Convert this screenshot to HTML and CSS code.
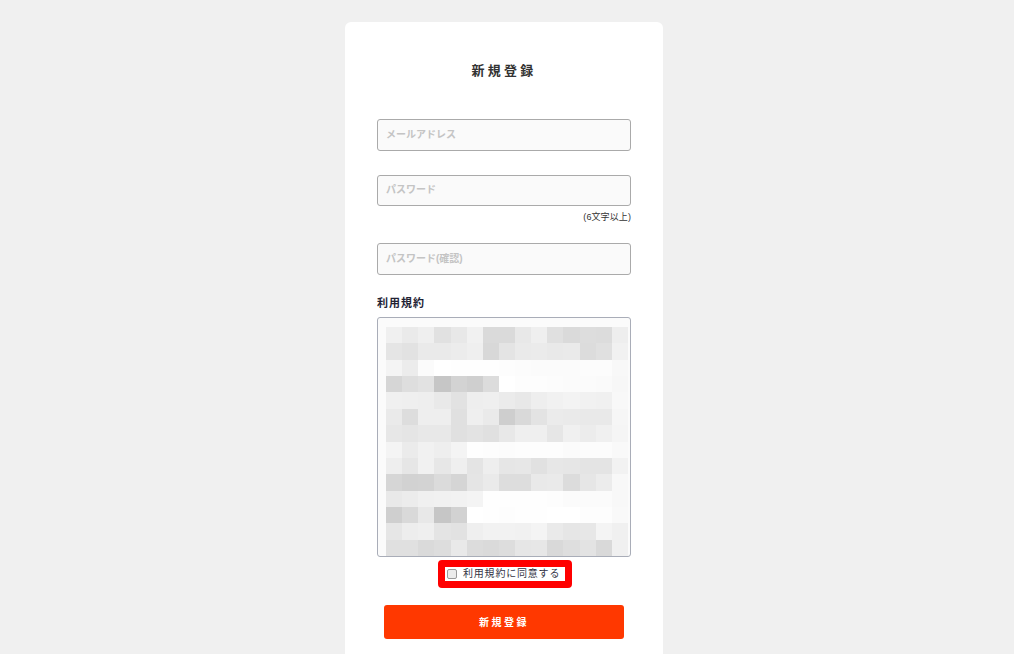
FILE: index.html
```html
<!DOCTYPE html>
<html lang="ja">
<head>
<meta charset="UTF-8">
<title>新規登録</title>
<link rel="stylesheet" href="styles.css">
</head>
<body>
<div class="card">
  <h1 class="title">新規登録</h1>
  <form class="form">
    <div class="field">
      <input class="text-input" type="text" placeholder="メールアドレス">
    </div>
    <div class="field field-password">
      <input class="text-input text-input-short" type="password" placeholder="パスワード">
      <p class="note">(6文字以上)</p>
    </div>
    <div class="field field-confirm">
      <input class="text-input" type="password" placeholder="パスワード(確認)">
    </div>
    <p class="terms-label">利用規約</p>
    <div class="terms-box">
      <div class="mosaic" id="mosaic"></div>
    </div>
    <div class="agree-row">
      <label class="agree">
        <input class="agree-check" type="checkbox">
        <span class="agree-text">利用規約に同意する</span>
      </label>
    </div>
    <button class="submit" type="button">新規登録</button>
  </form>
</div>
<script src="script.js"></script>
</body>
</html>
```

FILE: styles.css
```css
html, body {
  margin: 0;
  height: 654px;
  overflow: hidden;
}
body {
  box-sizing: border-box;
  padding-right: 6px;
  background-color: #f0f0f0;
  font-family: "Liberation Sans", "Noto Sans CJK JP", sans-serif;
  color: #333;
}
.card {
  box-sizing: border-box;
  width: 318px;
  height: 700px;
  margin: 22px auto 0;
  padding: 0 32px;
  background-color: #fff;
  border-radius: 6px;
}
.title {
  margin: 0;
  padding-top: 39px;
  height: 58px;
  line-height: 20px;
  font-size: 13px;
  font-weight: bold;
  letter-spacing: 3.2px;
  text-align: center;
}
.field {
  margin-bottom: 24px;
}
.field-password {
  margin-bottom: 20px;
}
.field-confirm {
  margin-bottom: 19px;
}
.text-input {
  display: block;
  box-sizing: border-box;
  width: 254px;
  height: 32px;
  padding: 0 0 2px 8px;
  background-color: #fafafa;
  border: 1px solid #aaa;
  border-radius: 3px;
  font-family: inherit;
  font-size: 10px;
  font-weight: bold;
  outline: none;
}
.text-input-short {
  height: 31px;
}
.text-input::placeholder {
  color: #c4c4c4;
}
.note {
  margin: 5px 0 0;
  line-height: 12px;
  font-size: 9px;
  letter-spacing: 0.1px;
  text-align: right;
}
.terms-label {
  margin: 0 0 5px;
  line-height: 18px;
  font-size: 11px;
  font-weight: bold;
  letter-spacing: 1px;
  color: #223;
}
.terms-box {
  box-sizing: border-box;
  width: 254px;
  height: 240px;
  padding: 9px 2px 0 8px;
  background-color: #fbfbfb;
  border: 1px solid #a9adb8;
  border-radius: 3px;
  overflow: hidden;
}
.mosaic {
  display: grid;
  grid-template-columns: repeat(15, 1fr);
  grid-template-rows: repeat(14, 1fr);
  width: 242px;
  height: 229px;
}
.agree-row {
  display: flex;
  justify-content: center;
  margin-top: 3px;
  padding-left: 2px;
}
.agree {
  display: flex;
  align-items: center;
  gap: 6px;
  box-sizing: border-box;
  width: 134px;
  height: 28px;
  padding-left: 2px;
  background-color: #fff;
  border: 7px solid #f00;
  border-radius: 4px;
  font-size: 10px;
  letter-spacing: 0.8px;
  white-space: nowrap;
  color: #334;
}
.agree-text {
  padding-bottom: 3px;
}
.agree-check {
  appearance: none;
  box-sizing: border-box;
  width: 10px;
  height: 10px;
  margin: 0;
  flex: none;
  background-color: #ececec;
  border: 1px solid #9a9a9a;
  border-radius: 2px;
}
.submit {
  display: block;
  width: 240px;
  height: 34px;
  margin: 17px auto 0;
  padding: 0 0 2px;
  background-color: #ff3800;
  border: 0;
  border-radius: 3px;
  font-family: inherit;
  font-size: 10px;
  font-weight: bold;
  letter-spacing: 2.5px;
  color: #fff;
}
```

FILE: script.js
```js
// グレーの値を行ごとに並べたモザイク
var rows = [
  "f0 ea ef e1 e8 f1 da da e8 ef e0 da dd dc ee",
  "e5 e2 ea ea ec ef d8 e4 ea eb e9 ea dc e0 f1",
  "f4 ec fb ff fe fe fe fd fc fb fb fb fc fc f8",
  "d6 de e2 c6 d3 cf dc ff fd fd fc fb fb fa f7",
  "f0 ef ee e9 e2 ee ef eb e8 ee f1 f3 f1 f0 f8",
  "ea dd ee ee e0 ef ea ce d9 e3 eb ea e9 e9 f6",
  "e7 e5 e8 e8 e0 e3 e0 e8 ef ef e6 f0 ec f0 f5",
  "f4 eb f1 ee f4 fe fd fc fd fd fd fb fc fc f9",
  "ee e6 f1 e7 ef e4 ee e6 e7 e1 e7 e6 e4 e4 f2",
  "d6 d2 d3 db d5 e5 ea dd dd e9 ea dc e6 ec f8",
  "e9 ec f0 f1 f2 f4 fe fe fe fe fd fb fb fb f8",
  "cf d9 e8 c6 d2 ff fe fd fe fe ff ff fd fd f9",
  "e6 ed ef e4 e2 ef f2 f2 f1 f4 ea e6 e7 f4 f0",
  "e0 e0 da dd e9 dc da dd e6 e7 d9 de e3 d9 f0"
];

var mosaic = document.getElementById("mosaic");
for (var i = 0; i < rows.length; i++) {
  var cells = rows[i].split(" ");
  for (var j = 0; j < cells.length; j++) {
    var cell = document.createElement("span");
    cell.style.backgroundColor = "#" + cells[j] + cells[j] + cells[j];
    mosaic.appendChild(cell);
  }
}
```
